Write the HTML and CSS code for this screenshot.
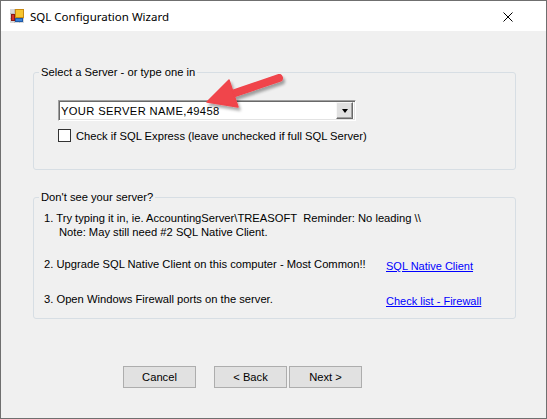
FILE: index.html
```html
<!DOCTYPE html>
<html>
<head>
<meta charset="utf-8">
<link rel="stylesheet" href="styles.css">
</head>
<body>
<div class="window">
  <div class="titlebar">
    <svg class="app-icon" width="14" height="14" viewBox="0 0 14 14">
      <rect x="0" y="0" width="14" height="14" fill="#d9d9d9"/>
      <path d="M0 4.5H14M0 9.5H14M4.5 0V14M9.5 0V14" stroke="#bdbdbd" stroke-width="1"/>
      <rect x="5.5" y="0.5" width="8" height="8" fill="#f7c52e" stroke="#c98a12"/>
      <rect x="1.5" y="5.5" width="3" height="6" fill="#d4322a" stroke="#8c1a14"/>
      <rect x="5.5" y="9.5" width="7" height="3" fill="#3c82d6" stroke="#1f5aa8"/>
    </svg>
    <span class="title">SQL Configuration Wizard</span>
    <svg class="close" width="10" height="10" viewBox="0 0 10 10">
      <path d="M0.5 0.5L9.5 9.5M9.5 0.5L0.5 9.5" stroke="#000" stroke-width="1"/>
    </svg>
  </div>
  <div class="content">
    <div class="group group1">
      <div class="legend">Select a Server - or type one in</div>
      <div class="combo">
        <span class="combo-text">YOUR SERVER NAME,49458</span>
        <span class="combo-btn"><span class="tri"></span></span>
      </div>
      <label class="check">
        <span class="box"></span>
        <span>Check if SQL Express (leave unchecked if full SQL Server)</span>
      </label>
    </div>
    <div class="group group2">
      <div class="legend">Don't see your server?</div>
      <div class="item item1">1. Try typing it in, ie. AccountingServer\TREASOFT&nbsp; Reminder: No leading \\</div>
      <div class="item note">Note: May still need #2 SQL Native Client.</div>
      <div class="row row2">
        <span class="item-text">2. Upgrade SQL Native Client on this computer - Most Common!!</span>
        <a class="link" href="#">SQL Native Client</a>
      </div>
      <div class="row row3">
        <span class="item-text">3. Open Windows Firewall ports on the server.</span>
        <a class="link" href="#">Check list - Firewall</a>
      </div>
    </div>
    <div class="buttons">
      <button class="btn cancel">Cancel</button>
      <button class="btn back">&lt; Back</button>
      <button class="btn next">Next &gt;</button>
    </div>
  </div>
  <svg class="arrow" width="547" height="419" viewBox="0 0 547 419">
    <defs>
      <filter id="sh" x="-20%" y="-20%" width="140%" height="160%">
        <feGaussianBlur in="SourceAlpha" stdDeviation="1.6"/>
        <feOffset dx="1.5" dy="3" result="b"/>
        <feComponentTransfer><feFuncA type="linear" slope="0.35"/></feComponentTransfer>
        <feMerge><feMergeNode/><feMergeNode in="SourceGraphic"/></feMerge>
      </filter>
    </defs>
    <g filter="url(#sh)" fill="#f0444b" stroke="#f0444b">
      <path d="M232 94 L279 78" stroke-width="8" stroke-linecap="round" fill="none"/>
      <path d="M207 102 L229 80 L238 107 Z" stroke-width="1.5" stroke-linejoin="round"/>
    </g>
  </svg>
</div>
</body>
</html>
```
FILE: styles.css
```css
* { box-sizing: border-box; }
html, body { margin: 0; padding: 0; }
body {
  width: 547px;
  height: 419px;
  overflow: hidden;
  background: #f0f0f0;
  font-family: "Liberation Sans", Arial, sans-serif;
  font-size: 11.2px;
  color: #000;
}
.window {
  position: relative;
  width: 547px;
  height: 419px;
  border: 1px solid #6f6f6f;
  background: #f0f0f0;
  display: flex;
  flex-direction: column;
}
.titlebar {
  height: 30px;
  background: #fff;
  display: flex;
  align-items: center;
  padding-left: 9px;
  flex-shrink: 0;
}
.title {
  margin-left: 6px;
  font-family: "Noto Sans", "Open Sans", sans-serif;
  font-size: 11.5px;
  color: #000;
  flex: 1;
}
.close { margin-right: 33px; margin-top: 1px; }
.content {
  flex: 1;
  display: flex;
  flex-direction: column;
}
.group {
  margin-left: 32px;
  width: 483px;
  border: 1px solid #d7dee4;
  border-radius: 3px;
}
.group1 { margin-top: 41px; height: 98px; }
.group2 { margin-top: 27px; height: 122px; }
.legend {
  margin-top: -7px;
  margin-left: 5px;
  padding: 0 2px;
  height: 13px;
  line-height: 13px;
  background: #f0f0f0;
  width: fit-content;
}
.combo {
  margin-top: 21px;
  margin-left: 24px;
  width: 298px;
  height: 21px;
  background: #fff;
  border: 1px solid;
  border-color: #a0a0a0 #ffffff #ffffff #a0a0a0;
  box-shadow: inset 1px 1px 0 #696969, inset -1px -1px 0 #e3e3e3;
  display: flex;
  align-items: center;
  padding-left: 2px;
  padding-right: 2px;
}
.combo-text { flex: 1; line-height: 13px; padding-top: 1px; letter-spacing: 0.35px; }
.combo-btn {
  width: 17px;
  height: 17px;
  background: #e1e1e1;
  border: 1px solid;
  border-color: #f8f8f8 #696969 #696969 #f8f8f8;
  box-shadow: inset -1px -1px 0 #a0a0a0;
  display: flex;
  align-items: center;
  justify-content: center;
}
.tri {
  width: 0;
  height: 0;
  border-left: 3.5px solid transparent;
  border-right: 3.5px solid transparent;
  border-top: 4px solid #000;
  margin-top: 1px;
}
.check {
  margin-top: 8px;
  margin-left: 24px;
  display: flex;
  align-items: center;
  gap: 5px;
  height: 13px;
}
.box {
  width: 13px;
  height: 13px;
  background: #fff;
  border: 1px solid #333;
}
.item { line-height: 13px; }
.item1 { margin-top: 8px; margin-left: 10px; }
.note { margin-left: 25px; margin-top: 1px; }
.row {
  display: flex;
  align-items: flex-start;
  margin-left: 10px;
  line-height: 13px;
}
.row2 { margin-top: 19px; }
.row3 { margin-top: 20px; }
.item-text { width: 342px; }
.link {
  color: #0000ff;
  text-decoration: underline;
  margin-top: 2px;
  font-size: 11px;
}
.buttons {
  margin-top: 47px;
  margin-left: 122px;
  display: flex;
}
.btn {
  width: 73px;
  height: 22px;
  background: #e1e1e1;
  border: 1px solid #adadad;
  font-family: "Liberation Sans", Arial, sans-serif;
  font-size: 11.2px;
  color: #000;
  padding: 0;
  margin: 0;
}
.back { margin-left: 18px; }
.next { margin-left: 2px; }
.arrow {
  position: absolute;
  left: -1px;
  top: -1px;
  pointer-events: none;
}
```
